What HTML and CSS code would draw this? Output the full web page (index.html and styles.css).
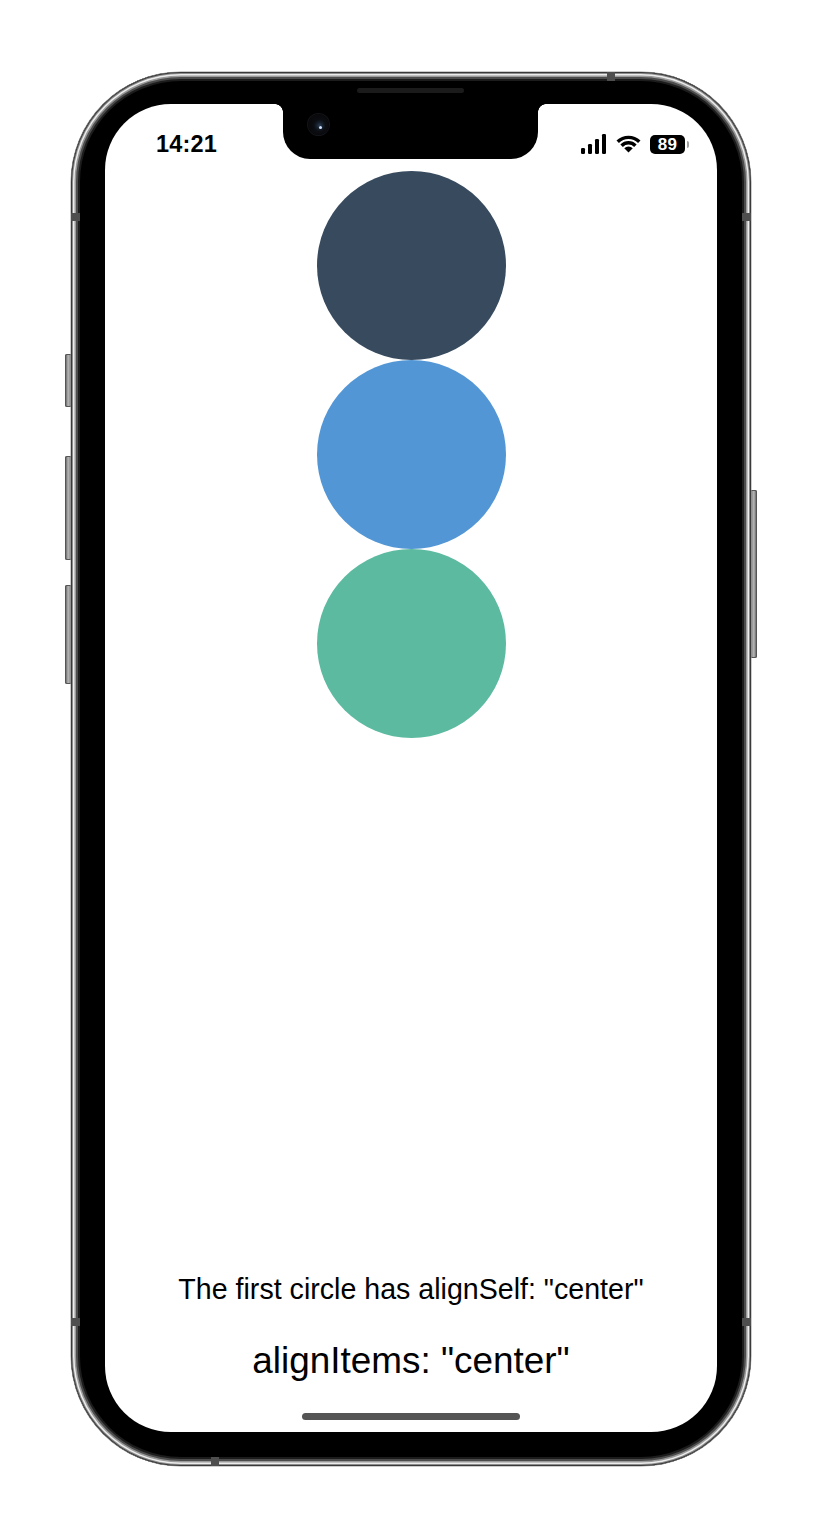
FILE: index.html
```html
<!DOCTYPE html>
<html lang="en">
<head>
<meta charset="utf-8">
<title>alignItems: center</title>
<link rel="stylesheet" href="styles.css">
</head>
<body>
<div class="stage">
  <div class="device">
    <span class="btn btn-silent"></span>
    <span class="btn btn-vol-up"></span>
    <span class="btn btn-vol-down"></span>
    <span class="btn btn-power"></span>
    <span class="band band-top"></span>
    <span class="band band-bottom"></span>
    <span class="band band-l1"></span>
    <span class="band band-l2"></span>
    <span class="band band-r1"></span>
    <span class="band band-r2"></span>
    <span class="speaker"></span>
    <div class="screen">
      <div class="notch"><span class="camera"></span></div>
      <div class="status">
        <span class="time">14:21</span>
        <div class="status-icons">
          <svg class="signal" width="25" height="20" viewBox="0 0 25 20" aria-hidden="true">
            <rect x="0" y="14" width="4" height="6" rx="1.2"/>
            <rect x="7" y="10" width="4" height="10" rx="1.2"/>
            <rect x="14" y="5" width="4" height="15" rx="1.2"/>
            <rect x="21" y="0" width="4" height="20" rx="1.2"/>
          </svg>
          <svg class="wifi" width="25" height="19" viewBox="-0.5 0 25 19" aria-hidden="true">
            <path d="M0 5.6 A17 17 0 0 1 24 5.6 L21.55 8.05 A13.5 13.5 0 0 0 2.45 8.05 Z"/>
            <path d="M3.87 9.45 A11.5 11.5 0 0 1 20.13 9.45 L17.66 11.92 A8 8 0 0 0 6.34 11.92 Z"/>
            <path d="M7.76 13.36 A6 6 0 0 1 16.24 13.36 L12 17.6 Z"/>
          </svg>
          <div class="battery"><span class="battery-level">89</span></div>
          <span class="battery-tip"></span>
        </div>
      </div>
      <div class="circle circle-dark"></div>
      <div class="circle circle-blue"></div>
      <div class="circle circle-green"></div>
      <p class="note">The first circle has alignSelf: "center"</p>
      <p class="title">alignItems: "center"</p>
      <div class="home-bar"></div>
    </div>
  </div>
</div>
</body>
</html>
```

FILE: styles.css
```css
html {
  margin: 0;
  padding: 0;
  background: #ffffff;
}

body {
  margin: 0;
  padding: 0;
}

.stage {
  width: 822px;
  height: 1536px;
  padding: 72px 0 0 71px;
  box-sizing: border-box;
}

.device {
  position: relative;
  width: 680px;
  height: 1394px;
  box-sizing: border-box;
  padding: 32px 34px 34px 34px;
  border-radius: 110px;
  background: #000;
  box-shadow:
    inset 0 0 0 1px #3a3a3a,
    inset 0 0 0 2px #8c8c8c,
    inset 0 0 0 3.5px #ececec,
    inset 0 0 0 5px #9a9a9a,
    inset 0 0 0 7px #4c4c4c,
    inset 0 0 0 9px #1c1c1c,
    0 0 0 0.5px #9a9a9a;
}

.btn {
  position: absolute;
  width: 7px;
  border-radius: 2px;
  z-index: -1;
  background: linear-gradient(to right, #4a4a4a, #b8b8b8 45%, #6a6a6a);
  box-shadow: inset 0 0 0 1px #555;
}

.btn-silent { left: -6px; top: 282px; height: 53px; }
.btn-vol-up { left: -6px; top: 384px; height: 104px; }
.btn-vol-down { left: -6px; top: 513px; height: 99px; }
.btn-power { right: -6px; top: 418px; height: 168px; background: linear-gradient(to left, #4a4a4a, #b8b8b8 45%, #6a6a6a); }

.band {
  position: absolute;
  background: #4e4e4e;
}

.band-top { top: 0; left: 536px; width: 8px; height: 9px; }
.band-bottom { bottom: 0; left: 140px; width: 8px; height: 9px; }
.band-l1 { left: 0; top: 141px; width: 9px; height: 8px; }
.band-l2 { left: 0; top: 1246px; width: 9px; height: 8px; }
.band-r1 { right: 0; top: 141px; width: 9px; height: 8px; }
.band-r2 { right: 0; top: 1246px; width: 9px; height: 8px; }

.speaker {
  position: absolute;
  left: 286px;
  top: 16px;
  width: 107px;
  height: 5px;
  border-radius: 3px;
  background: #1b1b1b;
}

.screen {
  position: relative;
  height: 100%;
  border-radius: 66px;
  background: #fff;
  overflow: hidden;
  display: flex;
  flex-direction: column;
  align-items: center;
  font-family: "Liberation Sans", Arial, sans-serif;
  color: #000;
}

.notch {
  position: absolute;
  top: 0;
  left: 178px;
  width: 255px;
  height: 55px;
  background: #000;
  border-radius: 0 0 27px 27px;
}

.notch::before,
.notch::after {
  content: "";
  position: absolute;
  top: 0;
  width: 8px;
  height: 8px;
}

.notch::before {
  left: -8px;
  background: radial-gradient(circle at 0 100%, transparent 7.5px, #000 8px);
}

.notch::after {
  right: -8px;
  background: radial-gradient(circle at 100% 100%, transparent 7.5px, #000 8px);
}

.camera {
  position: absolute;
  left: 25px;
  top: 10px;
  width: 21px;
  height: 21px;
  border-radius: 50%;
  background: radial-gradient(circle at 55% 55%, #2c3f55 0, #16202c 3px, #0b0d12 6px, #0a0a0d 10px);
  box-shadow: 0 0 0 1px #121418;
}

.camera::after {
  content: "";
  position: absolute;
  left: 11px;
  top: 12px;
  width: 3px;
  height: 3px;
  border-radius: 50%;
  background: #cfe2ff;
}

.status {
  align-self: stretch;
  box-sizing: border-box;
  height: 67px;
  padding: 28px 28px 0 51px;
  display: flex;
  justify-content: space-between;
  align-items: flex-start;
}

.time {
  font-size: 23.5px;
  line-height: 24px;
  font-weight: 700;
  letter-spacing: 0.2px;
}

.status-icons {
  height: 24px;
  display: flex;
  align-items: center;
}

.signal { fill: #000; display: block; margin-right: 10px; }
.wifi { fill: #000; display: block; margin-right: 9px; }

.battery {
  width: 35px;
  height: 19px;
  border-radius: 5px;
  background: #000;
  display: flex;
  align-items: center;
  justify-content: center;
}

.battery-level {
  color: #fff;
  font-size: 17px;
  line-height: 19px;
  font-weight: 700;
  letter-spacing: 0.4px;
}

.battery-tip {
  width: 2.5px;
  height: 7px;
  margin-left: 1.5px;
  border-radius: 0 2px 2px 0;
  background: #a0a0a0;
}

.circle {
  width: 189px;
  height: 189px;
  border-radius: 50%;
  flex: none;
}

.circle-dark { background: #374a5e; align-self: center; }
.circle-blue { background: #5296d5; }
.circle-green { background: #5bba9f; }

.note {
  margin: auto 0 0 0;
  font-size: 28.6px;
  line-height: 34px;
  text-align: center;
}

.title {
  margin: 34px 0 0 0;
  font-size: 36.9px;
  line-height: 42px;
  text-align: center;
}

.home-bar {
  flex: none;
  width: 218px;
  height: 7px;
  margin: 31px 0 12px 0;
  border-radius: 4px;
  background: #555;
}
```
